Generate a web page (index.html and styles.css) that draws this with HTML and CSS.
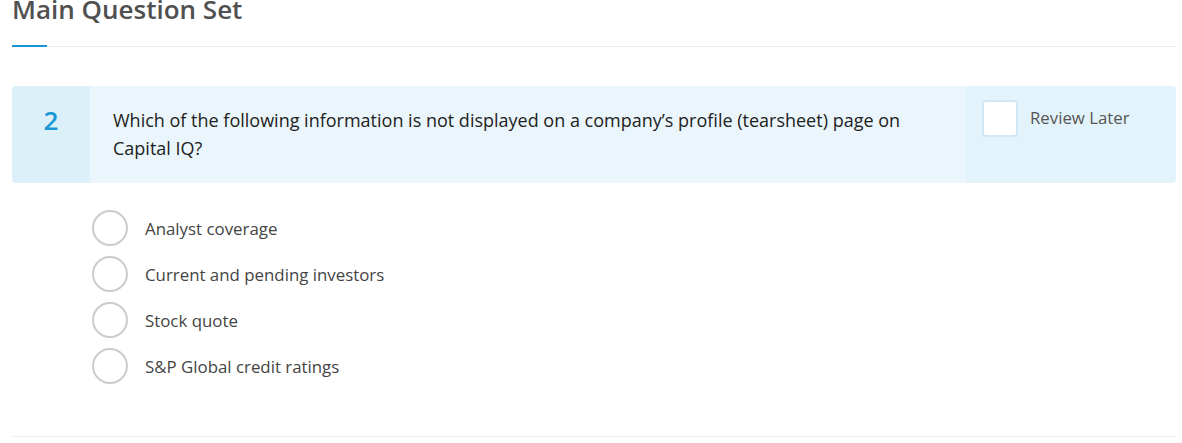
FILE: index.html
```html
<!DOCTYPE html>
<html>
<head>
<meta charset="utf-8">
<link rel="stylesheet" href="styles.css">
</head>
<body>
<div class="page">
  <div class="header">
    <h1 class="title">Main Question Set</h1>
  </div>
  <div class="card">
    <div class="num">2</div>
    <div class="question">Which of the following information is not displayed on a company’s profile (tearsheet) page on Capital IQ?</div>
    <div class="review">
      <span class="checkbox"></span>
      <span class="review-label">Review Later</span>
    </div>
  </div>
  <ul class="options">
    <li class="option"><span class="radio"></span><span class="opt-text">Analyst coverage</span></li>
    <li class="option"><span class="radio"></span><span class="opt-text">Current and pending investors</span></li>
    <li class="option"><span class="radio"></span><span class="opt-text">Stock quote</span></li>
    <li class="option"><span class="radio"></span><span class="opt-text">S&amp;P Global credit ratings</span></li>
  </ul>
  <div class="footer-line"></div>
</div>
</body>
</html>
```
FILE: styles.css
```css
html, body {
  margin: 0;
  padding: 0;
  background: #fff;
  overflow: hidden;
}
body {
  font-family: "Open Sans", "Liberation Sans", sans-serif;
  color: #444;
}
.page {
  padding: 0 6px 0 12px;
}
.header {
  position: relative;
  display: flow-root;
  height: 46px;
  border-bottom: 1px solid #eeeeee;
}
.header::after {
  content: "";
  position: absolute;
  left: 0;
  bottom: -1px;
  width: 35px;
  height: 2px;
  background: #1b95d0;
}
.title {
  margin: -6px 0 0 0;
  font-size: 26px;
  line-height: 30px;
  font-weight: 600;
  color: #505050;
}
.card {
  display: flex;
  margin-top: 39px;
  min-height: 97px;
  background: #eaf6fc;
  border-radius: 4px;
  overflow: hidden;
}
.num {
  width: 78px;
  flex: none;
  background: #dcf0fa;
  text-align: center;
  padding-top: 19px;
  font-size: 26px;
  line-height: 30px;
  font-weight: 600;
  color: #1a97d5;
}
.question {
  flex: 1;
  padding: 20px 40px 0 23px;
  font-size: 18px;
  line-height: 28px;
  color: #222;
}
.review {
  width: 194px;
  flex: none;
  background: #e3f3fb;
  padding: 14px 0 0 16px;
  display: flex;
  align-items: flex-start;
  gap: 12px;
}
.checkbox {
  width: 32px;
  height: 33px;
  background: #fff;
  border: 2px solid #cfe8f6;
  border-radius: 4px;
  flex: none;
}
.review-label {
  font-size: 16.8px;
  line-height: 22px;
  margin-top: 7px;
  color: #555;
}
.options {
  list-style: none;
  margin: 27px 0 0 0;
  padding: 0 0 0 80px;
  display: flex;
  flex-direction: column;
  gap: 10px;
}
.option {
  display: flex;
  align-items: center;
  gap: 17px;
  height: 36px;
}
.radio {
  width: 32px;
  height: 32px;
  border: 2px solid #cccccc;
  border-radius: 50%;
  flex: none;
}
.opt-text {
  font-size: 16.85px;
  color: #444;
}
.footer-line {
  margin-top: 52px;
  border-top: 1px solid #eeeeee;
}
```
